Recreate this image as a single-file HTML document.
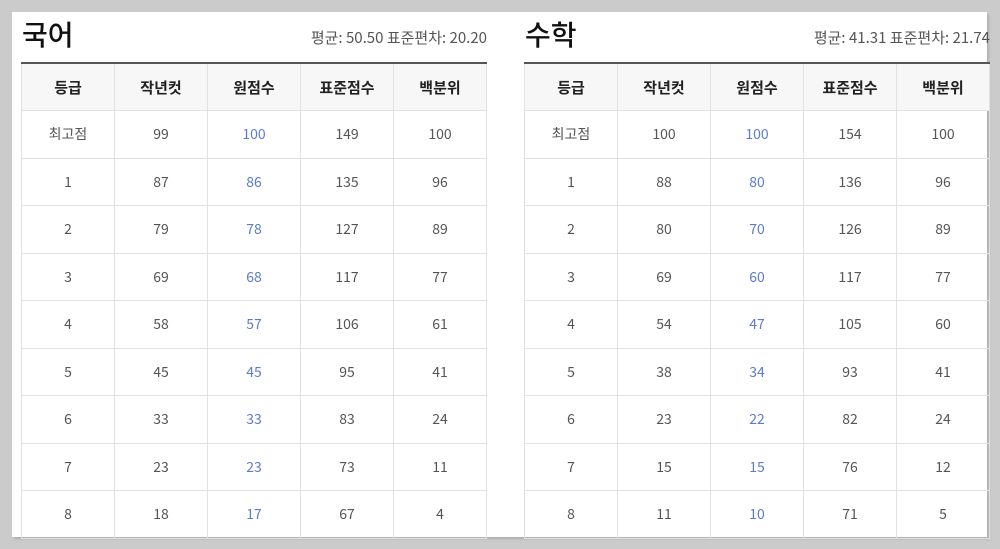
<!DOCTYPE html>
<html><head><meta charset="utf-8"><style>
body{margin:0;width:1000px;height:549px;background:#cbcbcb;overflow:hidden;font-family:"Noto Sans CJK KR","Liberation Sans",sans-serif;}
.panel{position:absolute;left:12px;top:12px;width:975px;height:525px;background:#fff;box-shadow:2px 2px 2px #b0b0b0;}
.sec{position:absolute;top:0;width:466px;}
h2{position:absolute;left:1px;top:4px;margin:0;font-size:28px;font-weight:500;color:#111;line-height:36px;}
.st{position:absolute;right:0;top:15px;font-size:15px;color:#555;line-height:22px;}
table{position:absolute;top:50px;left:0;width:466px;border-collapse:collapse;table-layout:fixed;border-top:2px solid #555;}
th,td{border:1px solid #e2e2e2;text-align:center;height:46.5px;padding:0;font-size:14px;color:#555;}
th{background:#f7f7f7;font-weight:bold;color:#222;font-size:15px;height:46px;}
td.b{color:#5b7ccb;}
</style></head><body><div class="panel">
<div class="sec" style="left:9px">
<h2>국어</h2><div class="st">평균: 50.50 표준편차: 20.20</div>
<table><tr><th>등급</th><th>작년컷</th><th>원점수</th><th>표준점수</th><th>백분위</th></tr>
<tr><td>최고점</td><td>99</td><td class="b">100</td><td>149</td><td>100</td></tr>
<tr><td>1</td><td>87</td><td class="b">86</td><td>135</td><td>96</td></tr>
<tr><td>2</td><td>79</td><td class="b">78</td><td>127</td><td>89</td></tr>
<tr><td>3</td><td>69</td><td class="b">68</td><td>117</td><td>77</td></tr>
<tr><td>4</td><td>58</td><td class="b">57</td><td>106</td><td>61</td></tr>
<tr><td>5</td><td>45</td><td class="b">45</td><td>95</td><td>41</td></tr>
<tr><td>6</td><td>33</td><td class="b">33</td><td>83</td><td>24</td></tr>
<tr><td>7</td><td>23</td><td class="b">23</td><td>73</td><td>11</td></tr>
<tr><td>8</td><td>18</td><td class="b">17</td><td>67</td><td>4</td></tr>
</table></div>
<div class="sec" style="left:512px">
<h2>수학</h2><div class="st">평균: 41.31 표준편차: 21.74</div>
<table><tr><th>등급</th><th>작년컷</th><th>원점수</th><th>표준점수</th><th>백분위</th></tr>
<tr><td>최고점</td><td>100</td><td class="b">100</td><td>154</td><td>100</td></tr>
<tr><td>1</td><td>88</td><td class="b">80</td><td>136</td><td>96</td></tr>
<tr><td>2</td><td>80</td><td class="b">70</td><td>126</td><td>89</td></tr>
<tr><td>3</td><td>69</td><td class="b">60</td><td>117</td><td>77</td></tr>
<tr><td>4</td><td>54</td><td class="b">47</td><td>105</td><td>60</td></tr>
<tr><td>5</td><td>38</td><td class="b">34</td><td>93</td><td>41</td></tr>
<tr><td>6</td><td>23</td><td class="b">22</td><td>82</td><td>24</td></tr>
<tr><td>7</td><td>15</td><td class="b">15</td><td>76</td><td>12</td></tr>
<tr><td>8</td><td>11</td><td class="b">10</td><td>71</td><td>5</td></tr>
</table></div>
</div></body></html>
